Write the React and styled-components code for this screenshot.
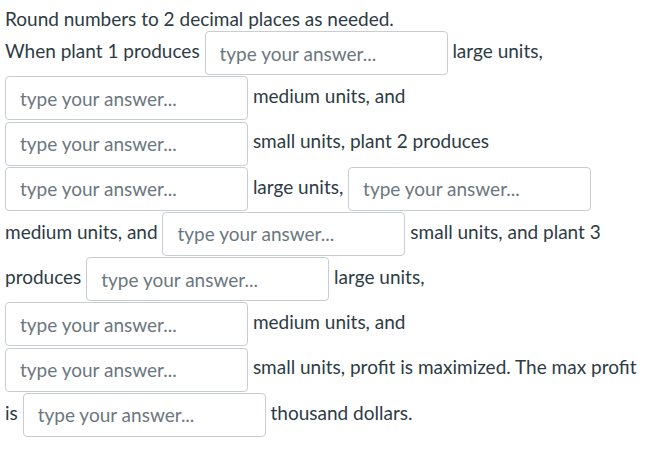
import React from 'react';
import styled, { createGlobalStyle } from 'styled-components';

const GlobalStyle = createGlobalStyle`
  body {
    margin: 0;
    background: #ffffff;
  }
`;

const Question = styled.div`
  width: 640px;
  padding: 8px 5px 0;
  font-family: Lato, 'Open Sans', sans-serif;
  font-size: 19px;
  color: #2d3b45;
`;

const Intro = styled.div`
  line-height: 22px;
`;

const Body = styled.div`
  line-height: 41px;
`;

const Blank = styled.input`
  box-sizing: border-box;
  display: inline-block;
  vertical-align: middle;
  width: 243px;
  height: 44px;
  margin: 0;
  padding: 0 14px;
  border: 1px solid #c7cdd1;
  border-radius: 4px;
  background: #ffffff;
  font-family: Lato, 'Open Sans', sans-serif;
  font-size: 19px;
  color: #2d3b45;
  outline: none;

  &::placeholder {
    color: #6b7780;
    opacity: 1;
  }
`;

const parts = [
  'When plant 1 produces',
  null,
  'large units,',
  null,
  'medium units, and',
  null,
  'small units, plant 2 produces',
  null,
  'large units,',
  null,
  'medium units, and',
  null,
  'small units, and plant 3 produces',
  null,
  'large units,',
  null,
  'medium units, and',
  null,
  'small units, profit is maximized. The max profit is',
  null,
  'thousand dollars.',
];

export default function App() {
  return (
    <>
      <GlobalStyle />
      <Question>
        <Intro>Round numbers to 2 decimal places as needed.</Intro>
        <Body>
          {parts.map((part, i) =>
            part === null ? (
              <React.Fragment key={i}>
                <Blank type="text" placeholder="type your answer..." />{' '}
              </React.Fragment>
            ) : (
              <React.Fragment key={i}>{part} </React.Fragment>
            )
          )}
        </Body>
      </Question>
    </>
  );
}
